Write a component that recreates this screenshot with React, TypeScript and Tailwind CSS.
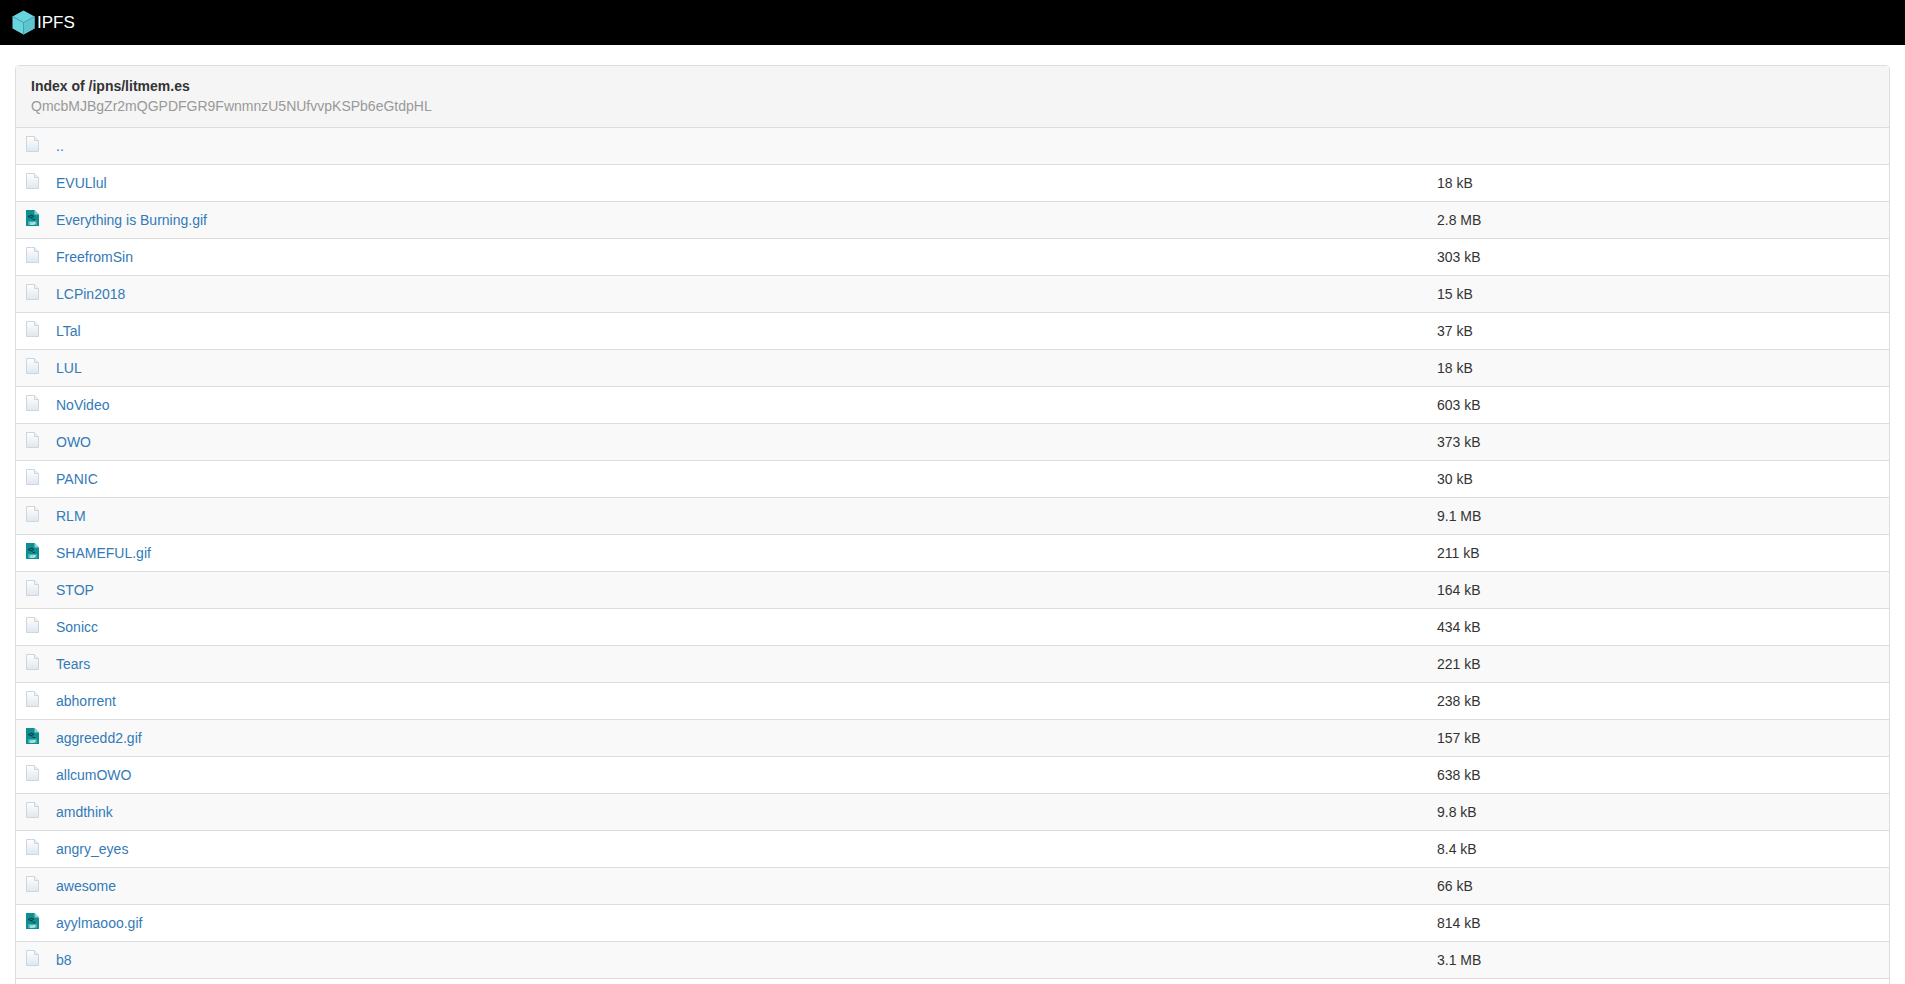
const files = [
  { name: "..", size: "" },
  { name: "EVULlul", size: "18 kB" },
  { name: "Everything is Burning.gif", size: "2.8 MB", gif: true },
  { name: "FreefromSin", size: "303 kB" },
  { name: "LCPin2018", size: "15 kB" },
  { name: "LTal", size: "37 kB" },
  { name: "LUL", size: "18 kB" },
  { name: "NoVideo", size: "603 kB" },
  { name: "OWO", size: "373 kB" },
  { name: "PANIC", size: "30 kB" },
  { name: "RLM", size: "9.1 MB" },
  { name: "SHAMEFUL.gif", size: "211 kB", gif: true },
  { name: "STOP", size: "164 kB" },
  { name: "Sonicc", size: "434 kB" },
  { name: "Tears", size: "221 kB" },
  { name: "abhorrent", size: "238 kB" },
  { name: "aggreedd2.gif", size: "157 kB", gif: true },
  { name: "allcumOWO", size: "638 kB" },
  { name: "amdthink", size: "9.8 kB" },
  { name: "angry_eyes", size: "8.4 kB" },
  { name: "awesome", size: "66 kB" },
  { name: "ayylmaooo.gif", size: "814 kB", gif: true },
  { name: "b8", size: "3.1 MB" },
];

function CubeLogo() {
  return (
    <svg width="23" height="25" viewBox="0 0 23 25" className="shrink-0">
      <path d="M11.5 0.5 22.5 6.5V18.5L11.5 24.5 0.5 18.5V6.5Z" fill="#6ad4dc" />
      <path d="M11.5 12.5 22.5 6.5V18.5L11.5 24.5Z" fill="#5ec5cf" />
      <path d="M0.5 6.5 11.5 12.5 22.5 6.5M11.5 12.5V24.5" fill="none" stroke="#3fa3ad" strokeWidth="1" />
    </svg>
  );
}

function BlankFile() {
  return (
    <svg width="13" height="16" viewBox="0 0 13 16" className="block">
      <defs>
        <linearGradient id="blankFill" x1="0" y1="0" x2="0" y2="1">
          <stop offset="0" stopColor="#ffffff" />
          <stop offset="1" stopColor="#dfe7ee" />
        </linearGradient>
      </defs>
      <path d="M0.5 0.5H8.5L12.5 4.5V15.5H0.5Z" fill="url(#blankFill)" stroke="#cdd6de" />
      <path d="M8.5 0.5V4.5H12.5" fill="#eef2f5" stroke="#cdd6de" />
    </svg>
  );
}

function GifFile() {
  return (
    <svg width="13" height="16" viewBox="0 0 13 16" className="block">
      <path d="M0 0H8.5L13 4.5V16H0Z" fill="#0f8f92" />
      <path d="M8.5 0V4.5H13Z" fill="#8fd3d3" />
      <path d="M2 6.5 6 5 8 6.5 5 7.5ZM5 7.5 7 9.5H9" fill="none" stroke="#073f45" strokeWidth="1" />
      <rect x="2" y="11" width="9" height="4" fill="#3fb0b0" />
      <text x="6.5" y="14.5" textAnchor="middle" fontSize="3.6" fontWeight="700" fill="#ffffff" fontFamily="Liberation Sans, sans-serif">GIF</text>
    </svg>
  );
}

export default function App() {
  return (
    <div className="h-[984px] overflow-hidden bg-white font-['Liberation_Sans',Arial,sans-serif] text-sm text-[#333]">
      <nav className="flex h-[45px] items-center bg-black pl-3">
        <CubeLogo />
        <span className="ml-[2px] text-[17px] font-light leading-none text-white">IPFS</span>
      </nav>
      <main className="px-[15px] pt-5">
        <section className="rounded-t-[4px] border border-[#ddd] bg-white">
          <header className="h-[61px] bg-[#f5f5f5] px-[15px] pt-[10px] leading-5">
            <div className="font-bold">Index of /ipns/litmem.es</div>
            <div className="text-[#999]">QmcbMJBgZr2mQGPDFGR9FwnmnzU5NUfvvpKSPb6eGtdpHL</div>
          </header>
          {files.map((file, i) => (
            <div
              key={file.name}
              className={`flex h-[37px] items-center border-t border-[#ddd] ${i % 2 === 0 ? "bg-[#f9f9f9]" : "bg-white"}`}
            >
              <div className="ml-[10px] w-[30px] pb-[4px]">{file.gif ? <GifFile /> : <BlankFile />}</div>
              <a className="w-[1381px] text-[#337ab7]">{file.name}</a>
              <span>{file.size}</span>
            </div>
          ))}
          <div className="h-[37px] border-t border-[#ddd]" />
        </section>
      </main>
    </div>
  );
}
